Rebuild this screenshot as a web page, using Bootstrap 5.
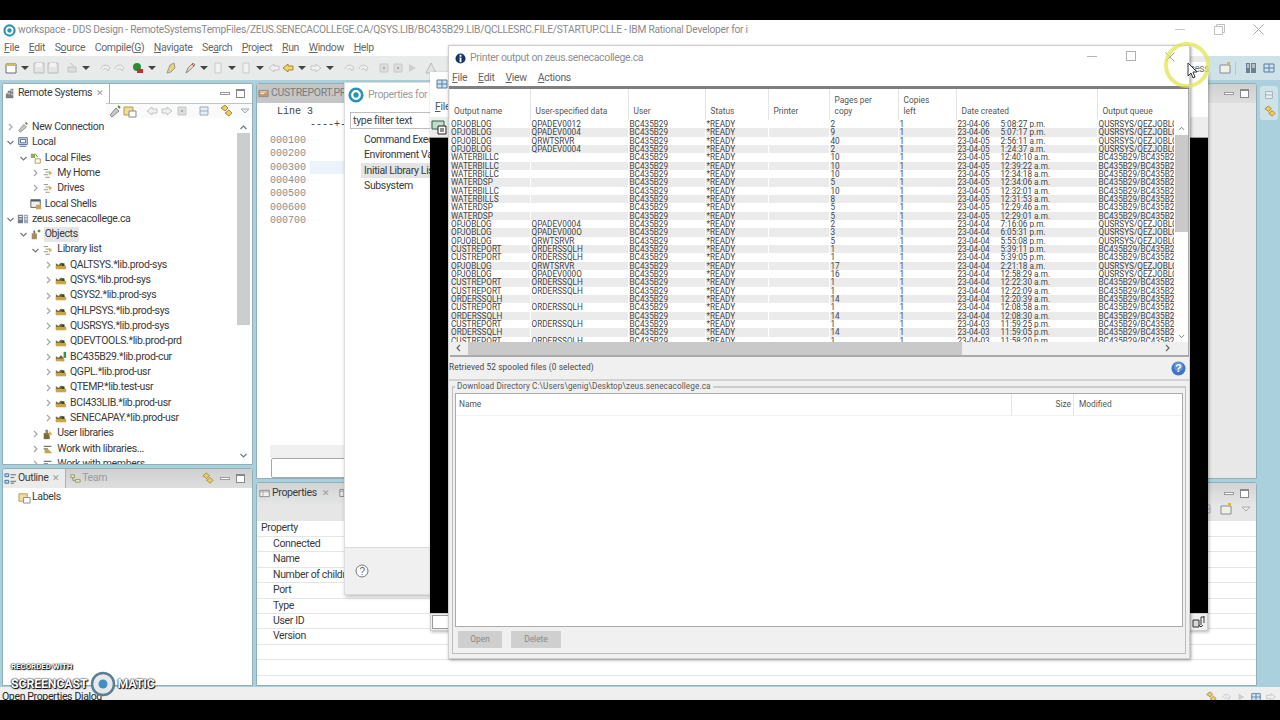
<!DOCTYPE html>
<html lang="en">
<head>
  <meta charset="UTF-8">
  <title>IBM Rational Developer for i</title>
  <link href="https://cdn.jsdelivr.net/npm/bootstrap@5.3.0/dist/css/bootstrap.min.css" rel="stylesheet">
  <script src="https://cdn.jsdelivr.net/npm/bootstrap@5.3.0/dist/js/bootstrap.bundle.min.js"></script>
  <style>
    html, body { width: 1280px; height: 720px; margin: 0; overflow: hidden; background: #000; }
    body { font-family: Roboto, "Liberation Sans", sans-serif; font-size: 10.5px; letter-spacing: -.35px; color: #3a3a3a; line-height: 1.2; }
    svg { display: block; flex: none; }
    .screen { position: absolute; left: 0; top: 20px; width: 1280px; height: 680px; background: #fff; overflow: hidden; }
    .titlebar { height: 20px; padding-left: 3px; gap: 2px; color: #8a8a8a; font-size: 10.2px; letter-spacing: -.24px; white-space: nowrap; }
    .winbtn { position: absolute; color: #a8a8a8; }
    .menubar { height: 16px; padding-left: 4px; gap: 9.6px; background: #fff; color: #666; font-size: 10.5px; }
    .toolbar { height: 24px; background: #e9ebeb; padding-left: 4px; }
    .toolbar .right-tools { margin-left: auto; background: #cfe2e8; height: 100%; width: 72px; }
    .tb { width: 14px; height: 14px; }
    .tb-gap { width: 5px; }
    .tb-gap2 { width: 7px; }
    .vsep { width: 1px; height: 13px; background: #c4c4c4; margin: 0 3px; }
    .workbench { height: 607px; background: #a9d0dc; padding: 3px 0 1px 2px; }
    .leftcol { width: 251px; gap: 3px; }
    .centercol { width: 1001px; margin-left: 3px; gap: 3px; }
    .trim { width: 23px; }
    .trimstack { margin: 3px 2px 0 3px; height: 34px; background: #cfe2e8; border-radius: 3px; }
    .pane { background: #fff; border: 1px solid #8db0b9; border-radius: 3px 3px 0 0; overflow: hidden; position: relative; }
    .pane-rs { height: 382px; }
    .pane-out { height: 218px; }
    .pane-top { height: 396px; }
    .pane-bot { height: 204px; }
    .tabhead { height: 19px; background: linear-gradient(#d0d0d0, #dedede); }
    .tabhead.on { background: #fff; }
    .tabitem { height: 19px; padding: 0 5px 0 1px; gap: 1px; background: #fff; border-right: 1px solid #9bb6bd; white-space: nowrap; }
    .tabitem.soft { background: #ebebeb; }
    .tabitem.off { background: transparent; color: #9a9a9a; border-right: 0; padding-left: 3px; gap: 0; }
    .tabitem.grey { background: #c6c6c6; color: #7c7c7c; gap: 2px; }
    .xmark { color: #9a9a9a; font-size: 9px; margin-left: 3px; }
    .paneicons { margin-left: auto; gap: 6px; padding-right: 7px; }
    .minbtn { width: 10px; height: 3px; border: 1px solid #999; background: #fff; }
    .maxbtn { width: 9px; height: 9px; border: 1px solid #888; background: #fff; border-top-width: 2px; }
    .viewtools { height: 15px; background: #fafafa; padding-left: 2px; gap: 1px; margin-left: 103px; border-top: 1px solid #b6c8cd; }
    .treebox { height: 346px; padding-top: 1.5px; overflow: hidden; position: relative; }
    .treerow { height: 15.33px; white-space: nowrap; font-size: 10.5px; }
    .treerow .chev { width: 9px; margin-right: 2px; }
    .treerow .ico { width: 12px; margin-right: 3px; }
    .treerow .sel { background: #e6e6e6; padding: 1px 1px; margin-left: -1px; }
    .vscroll { position: absolute; right: 2px; top: 0; bottom: 0; width: 13px; background: #fff; }
    .vscroll .thumb { position: absolute; left: 0; right: 0; background: #cdcdcd; }
    .labelrow { height: 15px; padding-left: 15px; gap: 1px; margin-top: 2px; }
    .editor-body { font-family: "Liberation Mono", monospace; font-size: 10px; letter-spacing: 0; position: relative; }
    .linehead { color: #444; padding: 3px 0 0 20px; height: 16px; }
    .ruler { color: #444; padding-left: 53px; height: 15px; }
    .linenum { height: 13.33px; line-height: 13.33px; padding-left: 13px; color: #8c8c8c; }
    .linenum.cur { background: linear-gradient(90deg, #fff 53px, #edf3fb 53px); }
    .cmdgrey { height: 13px; margin: 218px 0 0 13px; background: #f0f0f0; }
    .cmdinput { height: 20px; margin-left: 14px; background: #fff; border: 1px solid #a8a8a8; border-radius: 2px; }
    .rightpane { width: 50px; margin-left: 3px; background: #e8e8e8; }
    .props-head { height: 38px; background: linear-gradient(#d2d4d4, #e6e6e6 60%); }
    .props-tab { height: 20px; padding: 0 5px 0 2px; gap: 2px; font-size: 10.5px; }
    .props-tab .tabico2 { margin-left: 8px; }
    .prop-tools { gap: 6px; padding-right: 3px; margin-top: -1px; }
    .props-table { margin: 0; width: 100%; color: #3a3a3a; }
    .props-table td { height: 15.4px; padding: 0 0 0 16px; font-size: 10.5px; line-height: 14.4px; border-bottom: 1px solid #e6e6e6; box-shadow: none; }
    .props-table td.ph { padding-left: 4px; }
    .statusbar { height: 13px; background: #efefef; padding: 3px 0 0 2px; font-size: 10.5px; color: #222; line-height: 13px; position: relative; }
    .statusbar .tray { position: absolute; right: 3px; top: 4px; gap: 3px; }
    .floatwin { position: absolute; }
    .dlg-props { left: 344px; top: 82px; width: 90px; height: 513px; background: #fff; border: 1px solid #ddd; box-shadow: 1px 2px 4px rgba(0,0,0,.25); overflow: hidden; }
    .dlg-title { height: 24px; padding-left: 3px; gap: 4px; color: #9c9c9c; white-space: nowrap; font-size: 10.5px; }
    .dlg-filter.form-control { height: 17px; width: 100px; margin: 5px 0 0 5px; padding: 0 2px; font-size: 10.5px; letter-spacing: -.3px; line-height: 15px; border-radius: 0; border-color: #bdbdbd; color: #444; min-height: 0; }
    .dlg-list { margin: 3px 0 0 0; }
    .dlg-list .list-group-item { border: 0; padding: 0 0 0 19px; height: 15.3px; line-height: 15.3px; font-size: 10.5px; color: #3a3a3a; white-space: nowrap; background: transparent; }
    .dlg-list .list-group-item.chosen { background: #e4e4e4; margin-left: 16px; padding-left: 3px; }
    .dlg-foot { position: absolute; left: 0; right: 0; bottom: 0; height: 47px; background: #f0f0f0; border-top: 1px solid #d8d8d8; padding-left: 10px; }
    .dlg-back { left: 430px; top: 72px; width: 778px; height: 559px; background: #000; box-shadow: 1px 1px 3px rgba(0,0,0,.3); }
    .back-top { height: 66px; background: #fff; position: relative; padding: 5px 0 0 5px; border-bottom: 1px solid #999; }
    .back-file { position: absolute; left: 5px; top: 29px; color: #555; }
    .back-tool { position: absolute; left: 0; top: 45px; right: 0; height: 20px; background: #ededed; padding-left: 1px; }
    .back-foot { position: absolute; left: 0; right: 0; bottom: 0; height: 18px; background: #f0f0f0; border: 1px solid #ccc; padding-left: 1px; }
    .back-foot .footbox { width: 18px; height: 14px; background: #fff; border: 1px solid #999; }
    .dlg-printer { left: 448px; top: 45px; width: 742px; height: 614px; background: #f0f0f0; box-shadow: 1px 1px 3px rgba(0,0,0,.4); border: 1px solid #cfcfcf; border-top: 0; }
    .pr-title { height: 25px; background: #fff; padding-left: 6px; gap: 4px; color: #8f8f8f; font-size: 10.5px; position: relative; border-top: 1px solid #ccc; }
    .pr-menu { height: 16px; background: #fff; padding-left: 3px; gap: 11px; color: #666; }
    .pr-rule { height: 3px; background: #7f7f7f; }
    .pr-list { margin-left: 1px; width: 739px; height: 268px; background: #fff; position: relative; border-right: 1px solid #aaa; border-bottom: 2px solid #aaa; }
    .pr-scrollarea { width: 724px; height: 253px; overflow: hidden; }
    .spool { table-layout: fixed; width: 724px; margin: 0; font-family: Roboto, "Liberation Sans", sans-serif; font-size: 8.2px; letter-spacing: 0; color: #444; }
    .spool th { height: 31px; vertical-align: bottom; font-weight: 400; font-size: 8.4px; line-height: 10.5px; padding: 0 0 4px 5px; color: #555; border-right: 1px solid #e4e4e4; border-bottom: 0; background: #fff; }
    .spool th:first-child { padding-left: 4px; }
    .spool td { height: 8.33px; line-height: 8.33px; padding: 0 0 0 1px; border: 0; border-right: 1px solid #fff; white-space: nowrap; overflow: hidden; background: #fff; box-shadow: none; }
    .spool tbody tr:nth-child(even) td { background: #ebebeb; }
    .spool .tm { display: inline-block; width: 43px; }
    .pr-vbar { position: absolute; right: 0; top: 31px; width: 13px; height: 222px; background: #fff; }
    .pr-vbar .thumb { position: absolute; top: 15px; height: 97px; left: 0; right: 0; background: #c9c9c9; }
    .pr-hbar { height: 13px; background: #efefef; position: relative; }
    .pr-hbar .thumb { position: absolute; left: 18px; width: 494px; top: 0; bottom: 0; background: #c9c9c9; }
    .pr-status { height: 24px; padding: 0 3px 0 0; font-size: 8.3px; letter-spacing: .1px; color: #444; border-bottom: 2px solid #d2d2d2; }
    .pr-group { margin: 5px 3px 0 3px; height: 268px; border: 1px solid #bdbdbd; border-top: 2px solid #ccc; position: relative; padding: 5px 2px 0 2px; }
    .pr-legend { position: absolute; left: 2px; top: -7px; background: #f0f0f0; padding: 0 2px; font-size: 8.2px; letter-spacing: .1px; color: #555; line-height: 10px; }
    .pr-files { height: 234px; background: #fff; border: 1px solid #aaa; }
    .pr-fhead { height: 22px; font-size: 8.4px; letter-spacing: 0; color: #555; border-bottom: 1px solid #f2f2f2; }
    .pr-fhead .nm { width: 556px; padding-left: 3px; border-right: 1px solid #e4e4e4; height: 100%; }
    .pr-fhead .sz { width: 62px; padding-right: 2px; border-right: 1px solid #e4e4e4; height: 100%; }
    .pr-fhead .md { padding-left: 5px; }
    .pr-buttons { gap: 9px; margin-top: 4px; padding-left: 3px; }
    .pr-buttons .btn { height: 17px; padding: 0; font-size: 8.4px; letter-spacing: 0; line-height: 15px; color: #8a8a8a; background: #cfcfcf; border: 1px solid #d0d0d0; border-radius: 0; opacity: 1; }
    .btn-open { width: 44px; }
    .btn-del { width: 50px; }
    .ring { left: 1164px; top: 42px; width: 46px; height: 46px; border: 4px solid rgba(226,230,80,.75); border-radius: 50%; }
    .pointer { left: 1187px; top: 62px; }
    .quicktext { left: 1190px; top: 62px; width: 19px; height: 15px; background: #fff; overflow: hidden; font-size: 10px; line-height: 14px; color: #777; }
    .rec { left: 11px; top: 662px; color: #fff; font-weight: 700; letter-spacing: 0; text-shadow: 0 0 1px #000, 0 0 2px #000, 1px 1px 1px #000; }
    .rec-a { font-size: 7.9px; line-height: 9px; }
    .rec-b { font-size: 12.3px; line-height: 16px; gap: 2px; letter-spacing: -.1px; }
  </style>
</head>
<body>
  <svg width="0" height="0" style="position:absolute">
    <defs>
      <symbol id="i-chevr" viewBox="0 0 9 12"><path d="M3 3l3 3-3 3" fill="none" stroke="#a5a5a5" stroke-width="1.2"/></symbol>
      <symbol id="i-chevk" viewBox="0 0 9 12"><path d="M3 3l3 3-3 3" fill="none" stroke="#666" stroke-width="1.2"/></symbol>
      <symbol id="i-chevd" viewBox="0 0 9 12"><path d="M1.5 5l3 3 3-3" fill="none" stroke="#777" stroke-width="1.2"/></symbol>
      <symbol id="i-drop" viewBox="0 0 14 14"><path d="M3 5h8l-4 4z" fill="#444"/></symbol>
      <symbol id="i-dropo" viewBox="0 0 14 14"><path d="M3 5h8l-4 4z" fill="#eee" stroke="#aaa"/></symbol>
      <symbol id="i-new" viewBox="0 0 14 14"><path d="M2 3h10v9H2z" fill="#fff" stroke="#667"/><path d="M2 3h10v2H2z" fill="#cdb96a"/></symbol>
      <symbol id="i-save" viewBox="0 0 14 14"><path d="M2 2h10v10H2z" fill="#e4e4e4" stroke="#bcbcbc"/><path d="M4 2h6v4H4z" fill="#f3f3f3"/></symbol>
      <symbol id="i-print" viewBox="0 0 14 14"><path d="M3 6h8v5H3zM5 2l4 3" fill="#ddd" stroke="#c2c2c2"/></symbol>
      <symbol id="i-undo" viewBox="0 0 14 14"><path d="M3 8c1-5 7-5 9-1l-2 3c-1-3-3-3-5-1" fill="#eee" stroke="#c4c4c4"/></symbol>
      <symbol id="i-run" viewBox="0 0 14 14"><circle cx="6" cy="6" r="4" fill="#2e8b3a"/><path d="M6 8h6v4H6z" fill="#c03030"/></symbol>
      <symbol id="i-pin" viewBox="0 0 14 14"><path d="M3 12l3-8 4-2 1 5-4 4z" fill="#e6d36c" stroke="#999"/></symbol>
      <symbol id="i-pen" viewBox="0 0 14 14"><path d="M3 12l2-5 5-5 2 2-5 5z" fill="#ecdcae" stroke="#888"/><path d="M9 3l2 2" stroke="#b44"/></symbol>
      <symbol id="i-page" viewBox="0 0 14 14"><path d="M4 2h6v10H4z" fill="#f2f2f2" stroke="#c8c8c8"/></symbol>
      <symbol id="i-left" viewBox="0 0 14 14"><path d="M2 7l5-4v2h5v4H7v2z" fill="#f0f0f0" stroke="#c4c4c4"/></symbol>
      <symbol id="i-lefty" viewBox="0 0 14 14"><path d="M2 7l5-4v2h5v4H7v2z" fill="#f1d66b" stroke="#a58c2c"/></symbol>
      <symbol id="i-right" viewBox="0 0 14 14"><path d="M12 7L7 3v2H2v4h5v2z" fill="#f0f0f0" stroke="#c4c4c4"/></symbol>
      <symbol id="i-sq" viewBox="0 0 14 14"><path d="M3 3h8v8H3z" fill="#ddd" stroke="#c8c8c8"/><path d="M6 6h2v2H6z" fill="#aaa"/></symbol>
      <symbol id="i-play" viewBox="0 0 14 14"><path d="M4 3l7 4-7 4z" fill="#cfcfcf"/></symbol>
      <symbol id="i-tri" viewBox="0 0 14 14"><path d="M7 2l5 10H2z" fill="#e2e2e2" stroke="#bbb"/></symbol>
      <symbol id="i-rs" viewBox="0 0 14 14"><path d="M2 12V7h2V4h3V2h3v10z" fill="#7f7f7f"/><path d="M8 3h1v2H8zM5 6h1v2H5zM8 7h1v2H8z" fill="#fff"/></symbol>
      <symbol id="i-conn" viewBox="0 0 14 14"><path d="M2 11l6-7 3 3-7 6z" fill="#c8c8c8" stroke="#8a8a8a"/><path d="M10 2l2 2" stroke="#5b8a3a" stroke-width="2"/></symbol>
      <symbol id="i-local" viewBox="0 0 14 14"><path d="M2 2h10v8H2z" fill="#dbe6f4" stroke="#3d5d86"/><path d="M4 4h6v4H4z" fill="#fff" stroke="#3d5d86"/><path d="M3 12h8" stroke="#3d5d86"/></symbol>
      <symbol id="i-files" viewBox="0 0 14 14"><path d="M1 2h5v5H1z" fill="#8fae55"/><path d="M6 8h6v5H6z" fill="#fff" stroke="#b28a3d"/><path d="M6 2l3 4" stroke="#5f7f3a"/></symbol>
      <symbol id="i-filt" viewBox="0 0 14 14"><path d="M2 3h5M4 6h5M2 9h5M4 12h5" stroke="#8a8a6a"/><path d="M8 4l4 3-4 3z" fill="#e1b34a"/></symbol>
      <symbol id="i-shell" viewBox="0 0 14 14"><path d="M1 2h11v9H1z" fill="#eee" stroke="#555"/><path d="M1 2h11v2H1z" fill="#557"/><path d="M7 8h6v5H7z" fill="#c9a25a"/></symbol>
      <symbol id="i-sys" viewBox="0 0 14 14"><path d="M1 2h6v10H1z" fill="#6f7f8f"/><path d="M8 2h5v10H8z" fill="#9aa8b4"/><path d="M2 4h4M2 7h4M9 4h3M9 7h3" stroke="#fff"/></symbol>
      <symbol id="i-obj" viewBox="0 0 14 14"><path d="M2 6h6v7H2z" fill="#a88a5c"/><path d="M4 3h2v3H4z" fill="#7a6a4a"/><path d="M9 2h3v3H9z" fill="#4f9a4a"/></symbol>
      <symbol id="i-lib" viewBox="0 0 14 14"><path d="M1 11V5l3 2 3-3 4 3 2 4z" fill="#6b6a3a"/><path d="M1 8h12v4H1z" fill="#c9a545"/><path d="M8 5h3v3H8z" fill="#40402a"/></symbol>
      <symbol id="i-libc" viewBox="0 0 14 14"><path d="M1 11V6l3 2 3-3 3 3v4z" fill="#6b6a3a"/><path d="M1 9h10v3H1z" fill="#c9a545"/><path d="M10 1h3v7h-3z" fill="#3f8f4a"/></symbol>
      <symbol id="i-ulib" viewBox="0 0 14 14"><path d="M2 6h7v7H2z" fill="#7c6a3a"/><path d="M8 3l4 4-4 3z" fill="#e1b34a"/><path d="M4 2h3v4H4z" fill="#888"/></symbol>
      <symbol id="i-wlib" viewBox="0 0 14 14"><path d="M2 4h9M2 7h5" stroke="#777" stroke-width="1.5"/><path d="M3 9l3-3 3 3 3 3H3z" fill="#c4a451"/></symbol>
      <symbol id="i-outl" viewBox="0 0 14 14"><path d="M1 2h4v3H1zM1 9h4v3H1z" fill="#cfe0f0" stroke="#3d6d9a"/><path d="M7 3h6M7 6h4M7 10h6M7 12h4" stroke="#666"/></symbol>
      <symbol id="i-team" viewBox="0 0 14 14"><path d="M2 3h4v3H2zM7 8h5v3H7z" fill="#e8e4c0" stroke="#9a9a6a"/><path d="M4 6v3h3" stroke="#7f9f5a" fill="none"/></symbol>
      <symbol id="i-label" viewBox="0 0 14 14"><path d="M1 3h9v8H1z" fill="#efdca0" stroke="#b79a4a"/><path d="M6 7h7v6H6z" fill="#fff" stroke="#888"/></symbol>
      <symbol id="i-link" viewBox="0 0 14 14"><path d="M2 4l4-3 3 3-3 3zM6 9l4-3 3 3-3 3z" fill="#e7cb66" stroke="#a98f3a"/></symbol>
      <symbol id="i-dv" viewBox="0 0 14 14"><path d="M3 3h8v8H3z" fill="#e8eef4" stroke="#9ab"/><path d="M3 7h8" stroke="#9ab"/></symbol>
      <symbol id="i-prop" viewBox="0 0 14 14"><path d="M1 3h12v8H1z" fill="#f2f2f2" stroke="#777"/><path d="M5 3v8M1 5h12" stroke="#999"/></symbol>
      <symbol id="i-ed" viewBox="0 0 14 14"><path d="M1 3h12v8H1z" fill="#c49a6a" stroke="#888"/><path d="M3 5h8M3 7h5" stroke="#fff"/></symbol>
      <symbol id="i-persp" viewBox="0 0 14 14"><path d="M2 4h10v8H2z" fill="#eef2e4" stroke="#889"/><path d="M9 1h3v3H9z" fill="#e1b34a"/></symbol>
      <symbol id="i-rse" viewBox="0 0 14 14"><path d="M2 2h4v10H2zM7 2h5v10H7z" fill="#6b7f8f"/><path d="M3 4h2M3 6h2M8 4h3M8 6h3" stroke="#fff"/></symbol>
      <symbol id="i-dds" viewBox="0 0 14 14"><path d="M2 3h10v8H2z" fill="#cfe3f3" stroke="#5a7f9f"/><path d="M7 3v8M2 7h10" stroke="#5a7f9f"/></symbol>
      <symbol id="i-mon" viewBox="0 0 16 16"><path d="M1 2h12v8H1z" fill="#bfe0c8" stroke="#2f5f4a"/><path d="M7 7h8v8H7z" fill="#fff" stroke="#222"/><path d="M9 10h4M9 12h4" stroke="#222"/></symbol>
      <symbol id="i-dl" viewBox="0 0 16 14"><path d="M2 5h6v7H2z" fill="#d8d8d8" stroke="#333"/><path d="M10 2v8M13 1v7M10 2h3M8 10l2 2 2-2" fill="none" stroke="#333"/></symbol>
      <symbol id="i-ibm" viewBox="0 0 18 18"><circle cx="9" cy="9" r="7" fill="#fff" stroke="#2b91b8" stroke-width="3"/><circle cx="9" cy="9" r="3" fill="#2b91b8"/></symbol>
      <symbol id="i-info" viewBox="0 0 12 12"><circle cx="6" cy="6" r="5.5" fill="#18356b"/><path d="M5 5h2v5H5zM5 2h2v2H5z" fill="#fff"/></symbol>
      <symbol id="i-help" viewBox="0 0 16 16"><circle cx="8" cy="8" r="7.5" fill="#3f75c4"/><circle cx="8" cy="6" r="5" fill="#7fa6dd" opacity=".6"/><text x="8" y="12" text-anchor="middle" font-size="11" font-weight="700" fill="#fff" font-family="Liberation Sans">?</text></symbol>
    </defs>
  </svg>

  <div class="screen d-flex flex-column">
    <div class="titlebar d-flex align-items-center">
      <svg width="13" height="13"><use href="#i-ibm"/></svg>
      <span>workspace - DDS Design - RemoteSystemsTempFiles/ZEUS.SENECACOLLEGE.CA/QSYS.LIB/BC435B29.LIB/QCLLESRC.FILE/STARTUP.CLLE - IBM Rational Developer for i</span>
    </div>
    <div class="menubar d-flex align-items-center">
      <span><u>F</u>ile</span><span><u>E</u>dit</span><span>S<u>o</u>urce</span><span>Compile(<u>G</u>)</span><span><u>N</u>avigate</span><span>Se<u>a</u>rch</span><span><u>P</u>roject</span><span><u>R</u>un</span><span><u>W</u>indow</span><span><u>H</u>elp</span>
    </div>
    <div class="toolbar d-flex align-items-center">
      <svg class="tb"><use href="#i-new"/></svg><svg class="tb"><use href="#i-drop"/></svg>
      <svg class="tb"><use href="#i-save"/></svg><svg class="tb"><use href="#i-save"/></svg><div class="tb-gap"></div>
      <svg class="tb"><use href="#i-print"/></svg><svg class="tb"><use href="#i-drop"/></svg><div class="tb-gap"></div>
      <svg class="tb"><use href="#i-undo"/></svg><svg class="tb"><use href="#i-undo"/></svg><div class="tb-gap"></div>
      <svg class="tb"><use href="#i-run"/></svg><svg class="tb"><use href="#i-drop"/></svg><div class="tb-gap"></div>
      <svg class="tb"><use href="#i-pin"/></svg><div class="tb-gap"></div>
      <svg class="tb"><use href="#i-pen"/></svg><svg class="tb"><use href="#i-drop"/></svg>
      <svg class="tb"><use href="#i-page"/></svg><svg class="tb"><use href="#i-drop"/></svg>
      <svg class="tb"><use href="#i-page"/></svg><svg class="tb"><use href="#i-drop"/></svg>
      <svg class="tb"><use href="#i-left"/></svg><svg class="tb"><use href="#i-lefty"/></svg><svg class="tb"><use href="#i-drop"/></svg>
      <svg class="tb"><use href="#i-right"/></svg><svg class="tb"><use href="#i-drop"/></svg><div class="tb-gap"></div>
      <svg class="tb"><use href="#i-undo"/></svg><svg class="tb"><use href="#i-undo"/></svg><div class="tb-gap2"></div>
      <svg class="tb"><use href="#i-sq"/></svg><svg class="tb"><use href="#i-sq"/></svg><svg class="tb"><use href="#i-play"/></svg><div class="tb-gap"></div>
      <svg class="tb"><use href="#i-tri"/></svg>
      <div class="right-tools d-flex align-items-center justify-content-end pe-1">
        <svg class="tb"><use href="#i-persp"/></svg><div class="vsep"></div><div class="tb-gap"></div>
        <svg class="tb"><use href="#i-rse"/></svg><svg class="tb ms-1"><use href="#i-dds"/></svg>
      </div>
    </div>

    <div class="workbench d-flex">
      <div class="leftcol d-flex flex-column">
        <div class="pane pane-rs">
          <div class="tabhead on d-flex align-items-center">
            <div class="tabitem d-flex align-items-center">
              <svg width="13" height="13"><use href="#i-rs"/></svg><span>Remote Systems</span><span class="xmark">✕</span>
            </div>
            <div class="paneicons d-flex align-items-center"><div class="minbtn"></div><div class="maxbtn"></div></div>
          </div>
          <div class="viewtools d-flex align-items-center">
            <svg class="tb"><use href="#i-conn"/></svg><svg class="tb"><use href="#i-label"/></svg><div class="vsep"></div>
            <svg class="tb"><use href="#i-left"/></svg><svg class="tb"><use href="#i-right"/></svg><svg class="tb"><use href="#i-sq"/></svg><div class="vsep"></div>
            <svg class="tb"><use href="#i-dv"/></svg><div class="vsep"></div><svg class="tb"><use href="#i-link"/></svg><svg class="tb ms-1"><use href="#i-dropo"/></svg>
          </div>
          <div class="treebox" id="tree">
            <div class="vscroll">
              <svg class="mx-auto mt-1" width="9" height="12" style="transform:rotate(180deg)"><use href="#i-chevd"/></svg>
              <div class="thumb" style="top:15px;height:192px"></div>
              <svg width="9" height="12" style="position:absolute;left:2px;bottom:3px"><use href="#i-chevd"/></svg>
            </div>
          </div>
        </div>
        <div class="pane pane-out">
          <div class="tabhead d-flex align-items-center">
            <div class="tabitem soft d-flex align-items-center">
              <svg width="13" height="13"><use href="#i-outl"/></svg><span>Outline</span><span class="xmark">✕</span>
            </div>
            <div class="tabitem off d-flex align-items-center">
              <svg width="13" height="13"><use href="#i-team"/></svg><span>Team</span>
            </div>
            <div class="paneicons d-flex align-items-center"><svg width="13" height="13"><use href="#i-link"/></svg><div class="minbtn"></div><div class="maxbtn"></div></div>
          </div>
          <div class="labelrow d-flex align-items-center">
            <svg width="13" height="13"><use href="#i-label"/></svg><span>Labels</span>
          </div>
        </div>
      </div>

      <div class="centercol d-flex flex-column">
        <div class="d-flex pane-top">
          <div class="pane flex-grow-1">
            <div class="tabhead d-flex align-items-center">
              <div class="tabitem grey d-flex align-items-center">
                <svg width="11" height="11"><use href="#i-ed"/></svg><span>CUSTREPORT.PRTF</span>
              </div>
            </div>
            <div class="editor-body">
              <div class="linehead">Line 3</div>
              <div class="ruler">----+----1----+----2</div>
              <div class="linenum">000100</div>
              <div class="linenum">000200</div>
              <div class="linenum cur">000300</div>
              <div class="linenum">000400</div>
              <div class="linenum">000500</div>
              <div class="linenum">000600</div>
              <div class="linenum">000700</div>
              <div class="cmdgrey"></div>
              <div class="cmdinput"></div>
            </div>
          </div>
          <div class="pane rightpane">
            <div class="tabhead d-flex align-items-center justify-content-end">
              <div class="paneicons d-flex align-items-center"><div class="minbtn"></div><div class="maxbtn"></div></div>
            </div>
          </div>
        </div>
        <div class="pane pane-bot">
          <div class="props-head">
            <div class="d-flex align-items-center">
              <div class="props-tab d-flex align-items-center">
                <svg width="11" height="11"><use href="#i-prop"/></svg><span>Properties</span><span class="xmark">✕</span>
                <svg class="tabico2" width="12" height="12"><use href="#i-prop"/></svg>
              </div>
              <div class="paneicons d-flex align-items-center"><div class="minbtn"></div><div class="maxbtn"></div></div>
            </div>
            <div class="prop-tools d-flex justify-content-end">
              <svg class="tb"><use href="#i-dv"/></svg><svg class="tb"><use href="#i-persp"/></svg><svg class="tb"><use href="#i-dropo"/></svg>
            </div>
          </div>
          <table class="table props-table">
            <tbody>
              <tr><td class="ph">Property</td></tr>
              <tr><td>Connected</td></tr>
              <tr><td>Name</td></tr>
              <tr><td>Number of children</td></tr>
              <tr><td>Port</td></tr>
              <tr><td>Type</td></tr>
              <tr><td>User ID</td></tr>
              <tr><td>Version</td></tr>
              <tr><td>&nbsp;</td></tr>
              <tr><td>&nbsp;</td></tr>
              <tr><td>&nbsp;</td></tr>
            </tbody>
          </table>
        </div>
      </div>

      <div class="trim">
        <div class="trimstack d-flex flex-column align-items-center justify-content-center gap-1">
          <svg width="12" height="12"><use href="#i-dv"/></svg>
          <svg width="13" height="13"><use href="#i-link"/></svg>
        </div>
      </div>
    </div>

    <div class="statusbar">
      Open Properties Dialog
      <div class="tray d-flex">
        <svg width="12" height="12"><use href="#i-link"/></svg><svg width="12" height="12"><use href="#i-undo"/></svg><svg width="12" height="12"><use href="#i-play"/></svg><svg width="12" height="12"><use href="#i-dds"/></svg><svg width="12" height="12"><use href="#i-right"/></svg>
      </div>
    </div>
  </div>

  <!-- windows sitting on top of the workbench -->
  <div class="winbtn" style="left:1175px;top:29px;width:10px;height:1px;background:#c4c4c4"></div>
  <svg class="winbtn" style="left:1214px;top:24px" width="11" height="11"><path d="M.5 2.5h8v8h-8zM2.5 2.5v-2h8v8h-2" fill="none" stroke="#c0c0c0"/></svg>
  <svg class="winbtn" style="left:1253px;top:24px" width="11" height="11"><path d="M.5.5l10 10M10.5.5l-10 10" stroke="#a8a8a8"/></svg>

  <div class="floatwin quicktext d-flex justify-content-end">Access</div>

  <div class="floatwin dlg-props">
    <div class="dlg-title d-flex align-items-center">
      <svg width="16" height="16"><use href="#i-ibm"/></svg><span>Properties for QCLLESRC</span>
    </div>
    <input class="form-control dlg-filter" value="type filter text">
    <div class="list-group dlg-list">
      <div class="list-group-item">Command Execution</div>
      <div class="list-group-item">Environment Variables</div>
      <div class="list-group-item chosen">Initial Library List</div>
      <div class="list-group-item">Subsystem</div>
    </div>
    <div class="dlg-foot d-flex align-items-center">
      <svg width="14" height="14" viewBox="0 0 14 14"><circle cx="7" cy="7" r="6" fill="#fff" stroke="#777"/><text x="7" y="10.5" text-anchor="middle" font-size="10" fill="#666" font-family="Liberation Sans">?</text></svg>
    </div>
  </div>

  <div class="floatwin dlg-back">
    <div class="back-top">
      <svg width="14" height="14"><use href="#i-dds"/></svg>
      <div class="back-file"><u>F</u>ile</div>
      <div class="back-tool d-flex align-items-center"><svg width="16" height="16"><use href="#i-mon"/></svg></div>
    </div>
    <div class="back-foot d-flex align-items-center justify-content-between">
      <div class="footbox"></div>
      <svg width="16" height="14"><use href="#i-dl"/></svg>
    </div>
  </div>

  <div class="floatwin dlg-printer">
    <div class="pr-title d-flex align-items-center">
      <svg width="11" height="11"><use href="#i-info"/></svg><span>Printer output on zeus.senecacollege.ca</span>
      <div class="winbtn" style="left:638px;top:10px;width:10px;height:1px;background:#b4b4b4"></div>
      <div class="winbtn" style="left:677px;top:5px;width:10px;height:10px;border:1px solid #b0b0b0"></div>
      <svg class="winbtn" style="left:716px;top:6px" width="10" height="10"><path d="M.5.5l9 9M9.5.5l-9 9" stroke="#a0a0a0"/></svg>
    </div>
    <div class="pr-menu d-flex align-items-center">
      <span><u>F</u>ile</span><span><u>E</u>dit</span><span><u>V</u>iew</span><span><u>A</u>ctions</span>
    </div>
    <div class="pr-rule"></div>
    <div class="pr-list">
      <div class="pr-scrollarea">
        <table class="table spool">
          <colgroup><col style="width:80px"><col style="width:98px"><col style="width:77px"><col style="width:63px"><col style="width:61px"><col style="width:69px"><col style="width:58px"><col style="width:141px"><col style="width:77px"></colgroup>
          <thead><tr><th>Output name</th><th>User-specified data</th><th>User</th><th>Status</th><th>Printer</th><th>Pages per<br>copy</th><th>Copies<br>left</th><th>Date created</th><th>Output queue</th></tr></thead>
          <tbody id="spoolRows"></tbody>
        </table>
      </div>
      <div class="pr-vbar">
        <svg class="mx-auto mt-1" width="9" height="10" style="transform:rotate(180deg)"><use href="#i-chevd"/></svg>
        <div class="thumb"></div>
        <svg width="9" height="10" style="position:absolute;left:2px;bottom:1px"><use href="#i-chevd"/></svg>
      </div>
      <div class="pr-hbar">
        <svg width="9" height="12" style="position:absolute;left:4px;top:0;transform:rotate(180deg)"><use href="#i-chevk"/></svg>
        <div class="thumb"></div>
        <svg width="9" height="12" style="position:absolute;right:16px;top:0"><use href="#i-chevk"/></svg>
      </div>
    </div>
    <div class="pr-status d-flex align-items-center justify-content-between">
      <span>Retrieved 52 spooled files (0 selected)</span>
      <svg width="15" height="15"><use href="#i-help"/></svg>
    </div>
    <div class="pr-group">
      <div class="pr-legend">Download Directory C:\Users\genig\Desktop\zeus.senecacollege.ca</div>
      <div class="pr-files">
        <div class="pr-fhead d-flex align-items-center">
          <div class="nm d-flex align-items-center">Name</div>
          <div class="sz d-flex align-items-center justify-content-end">Size</div>
          <div class="md">Modified</div>
        </div>
      </div>
      <div class="pr-buttons d-flex">
        <button class="btn btn-secondary btn-open" disabled>Open</button>
        <button class="btn btn-secondary btn-del" disabled>Delete</button>
      </div>
    </div>
  </div>

  <div class="floatwin ring"></div>
  <svg class="floatwin pointer" width="12" height="18" viewBox="0 0 12 18"><path d="M1 1v13l3-3 2 5 2-1-2-5h4z" fill="#fff" stroke="#333"/></svg>

  <div class="floatwin rec">
    <div class="rec-a">RECORDED WITH</div>
    <div class="rec-b d-flex align-items-center">
      <span>SCREENCAST</span>
      <svg width="26" height="26" viewBox="0 0 26 26"><circle cx="13" cy="13" r="11" fill="#e8e8e8" stroke="#5a7f94" stroke-width="2.5"/><circle cx="13" cy="13" r="4.5" fill="#3f8fc4"/></svg>
      <span>MATIC</span>
    </div>
  </div>

  <script>
    const treeRows = [
      [0, 'r', 'conn', 'New Connection'],
      [0, 'd', 'local', 'Local'],
      [1, 'd', 'files', 'Local Files'],
      [2, 'r', 'filt', 'My Home'],
      [2, 'r', 'filt', 'Drives'],
      [1, '', 'shell', 'Local Shells'],
      [0, 'd', 'sys', 'zeus.senecacollege.ca'],
      [1, 'd', 'obj', 'Objects', true],
      [2, 'd', 'filt', 'Library list'],
      [3, 'r', 'lib', 'QALTSYS.*lib.prod-sys'],
      [3, 'r', 'lib', 'QSYS.*lib.prod-sys'],
      [3, 'r', 'lib', 'QSYS2.*lib.prod-sys'],
      [3, 'r', 'lib', 'QHLPSYS.*lib.prod-sys'],
      [3, 'r', 'lib', 'QUSRSYS.*lib.prod-sys'],
      [3, 'r', 'lib', 'QDEVTOOLS.*lib.prod-prd'],
      [3, 'r', 'libc', 'BC435B29.*lib.prod-cur'],
      [3, 'r', 'lib', 'QGPL.*lib.prod-usr'],
      [3, 'r', 'lib', 'QTEMP.*lib.test-usr'],
      [3, 'r', 'lib', 'BCI433LIB.*lib.prod-usr'],
      [3, 'r', 'lib', 'SENECAPAY.*lib.prod-usr'],
      [2, 'r', 'ulib', 'User libraries'],
      [2, 'r', 'wlib', 'Work with libraries...'],
      [2, 'r', 'wlib', 'Work with members...']
    ];
    const tree = document.getElementById('tree');
    treeRows.reverse().forEach(([depth, arrow, icon, text, sel]) => {
      const row = document.createElement('div');
      row.className = 'treerow d-flex align-items-center';
      row.style.paddingLeft = (3 + depth * 12.67) + 'px';
      const chev = arrow ? `<svg class="chev" height="12"><use href="#i-chev${arrow}"/></svg>` : '<span class="chev"></span>';
      row.innerHTML = `${chev}<svg class="ico" height="12"><use href="#i-${icon}"/></svg><span class="${sel ? 'sel' : ''}">${text}</span>`;
      tree.prepend(row);
    });

    const Q = 'QUSRSYS/QEZJOBLOG', B = 'BC435B29/BC435B29';
    const W = 'WATERBILLC', D = 'WATERDSP', O = 'OPJOBLOG', C = 'CUSTREPORT', S = 'ORDERSSQLH';
    const spool = [
      [O, 'QPADEV0012', 2, '23-04-06', '5:08:27 p.m.', Q],
      [O, 'QPADEV0004', 9, '23-04-06', '5:07:17 p.m.', Q],
      [O, 'QRWTSRVR', 40, '23-04-05', '2:56:11 a.m.', Q],
      [O, 'QPADEV0004', 2, '23-04-05', '1:24:37 a.m.', Q],
      [W, '', 10, '23-04-05', '12:40:10 a.m.', B],
      [W, '', 10, '23-04-05', '12:39:22 a.m.', B],
      [W, '', 10, '23-04-05', '12:34:18 a.m.', B],
      [D, '', 5, '23-04-05', '12:34:06 a.m.', B],
      [W, '', 10, '23-04-05', '12:32:01 a.m.', B],
      ['WATERBILLS', '', 8, '23-04-05', '12:31:53 a.m.', B],
      [D, '', 5, '23-04-05', '12:29:46 a.m.', B],
      [D, '', 5, '23-04-05', '12:29:01 a.m.', B],
      [O, 'QPADEV0004', 2, '23-04-04', '7:16:06 p.m.', Q],
      [O, 'QPADEV000O', 3, '23-04-04', '6:05:31 p.m.', Q],
      [O, 'QRWTSRVR', 5, '23-04-04', '5:55:08 p.m.', Q],
      [C, S, 1, '23-04-04', '5:39:11 p.m.', B],
      [C, S, 1, '23-04-04', '5:39:05 p.m.', B],
      [O, 'QRWTSRVR', 17, '23-04-04', '2:21:18 a.m.', Q],
      [O, 'QPADEV000O', 16, '23-04-04', '12:58:29 a.m.', Q],
      [C, S, 1, '23-04-04', '12:22:30 a.m.', B],
      [C, S, 1, '23-04-04', '12:22:09 a.m.', B],
      [S, '', 14, '23-04-04', '12:20:39 a.m.', B],
      [C, S, 1, '23-04-04', '12:08:58 a.m.', B],
      [S, '', 14, '23-04-04', '12:08:30 a.m.', B],
      [C, S, 1, '23-04-03', '11:59:25 p.m.', B],
      [S, '', 14, '23-04-03', '11:59:05 p.m.', B],
      [C, S, 1, '23-04-03', '11:58:20 p.m.', B]
    ];
    document.getElementById('spoolRows').innerHTML = spool.map(r =>
      `<tr><td>${r[0]}</td><td>${r[1]}</td><td>BC435B29</td><td>*READY</td><td></td><td>${r[2]}</td><td>1</td><td><span class="tm">${r[3]}</span>${r[4]}</td><td>${r[5]}</td></tr>`
    ).join('');
  </script>
</body>
</html>
